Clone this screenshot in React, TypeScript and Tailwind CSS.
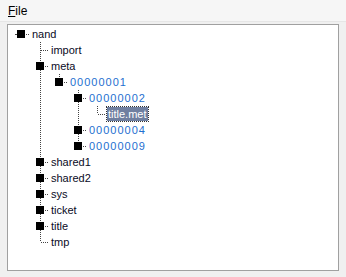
import React from 'react'

interface Node {
    label: string,
    depth: number,
    square?: boolean,
    blue?: boolean,
    selected?: boolean,
    // ancestor columns whose vertical line passes through this row
    rails: number[],
    last: boolean
}

const nodes: Node[] = [
    { label: 'nand', depth: 0, square: true, rails: [], last: true },
    { label: 'import', depth: 1, rails: [], last: false },
    { label: 'meta', depth: 1, square: true, rails: [], last: false },
    { label: '00000001', depth: 2, square: true, blue: true, rails: [1], last: true },
    { label: '00000002', depth: 3, square: true, blue: true, rails: [1], last: false },
    { label: 'title.met', depth: 4, selected: true, rails: [1, 3], last: true },
    { label: '00000004', depth: 3, square: true, blue: true, rails: [1], last: false },
    { label: '00000009', depth: 3, square: true, blue: true, rails: [1], last: true },
    { label: 'shared1', depth: 1, square: true, rails: [], last: false },
    { label: 'shared2', depth: 1, square: true, rails: [], last: false },
    { label: 'sys', depth: 1, square: true, rails: [], last: false },
    { label: 'ticket', depth: 1, square: true, rails: [], last: false },
    { label: 'title', depth: 1, square: true, rails: [], last: false },
    { label: 'tmp', depth: 1, rails: [], last: true },
]

const dot = { stroke: '#444', strokeWidth: 1, strokeDasharray: '1 1', shapeRendering: 'crispEdges' as const }

function Rail() {
    return (
        <svg width="19" height="16" className="shrink-0">
            <line x1="10.5" y1="0" x2="10.5" y2="16" {...dot} />
        </svg>
    )
}

function Branch({ node }: { node: Node }) {
    return (
        <svg width="19" height="16" className="shrink-0">
            {node.depth > 0 && <line x1="10.5" y1="0" x2="10.5" y2={node.last ? 8 : 16} {...dot} />}
            <line x1="11" y1="8.5" x2="19" y2="8.5" {...dot} />
            {node.depth === 0 && <line x1="4" y1="8.5" x2="7" y2="8.5" stroke="#444" shapeRendering="crispEdges" />}
            {node.square && <rect x="6" y="4" width="8" height="8" fill="#000" />}
        </svg>
    )
}

function Row({ node }: { node: Node }) {
    const cells = []
    for (let i = 0; i < node.depth; i++) {
        cells.push(node.rails.includes(i) ? <Rail key={i} /> : <div key={i} className="w-[19px] shrink-0"></div>)
    }
    return (
        <div className="flex h-[16px] items-center">
            {cells}
            <Branch node={node} />
            <span
                className={`ml-[1px] px-[1px] leading-[14px] whitespace-nowrap ${node.selected ? 'bg-[#6f7fa0] text-white outline outline-1 outline-dotted outline-[#333]' : node.blue ? 'text-[#1e6fd0] tracking-[1px]' : 'text-[#0a0a1e]'}`}
            >
                {node.label}
            </span>
        </div>
    )
}

export default function App() {
    return (
        <div className="w-[346px] h-[277px] bg-[#f0f0f0] flex flex-col text-[11px]" style={{ fontFamily: '"Liberation Sans", Arial, sans-serif' }}>
            <div className="h-[22px] bg-[#f6f6f6] border-b border-[#e6e6e6] flex items-center px-[8px] text-[12px]">
                <span className="text-black"><span className="underline">F</span>ile</span>
            </div>
            <div className="pt-[2px] px-[7px]">
                <div className="w-[332px] h-[247px] bg-white border border-[#a0a0a0] pt-[1px] pl-[3px]">
                    {nodes.map((n, i) => <Row key={i} node={n} />)}
                </div>
            </div>
        </div>
    )
}
